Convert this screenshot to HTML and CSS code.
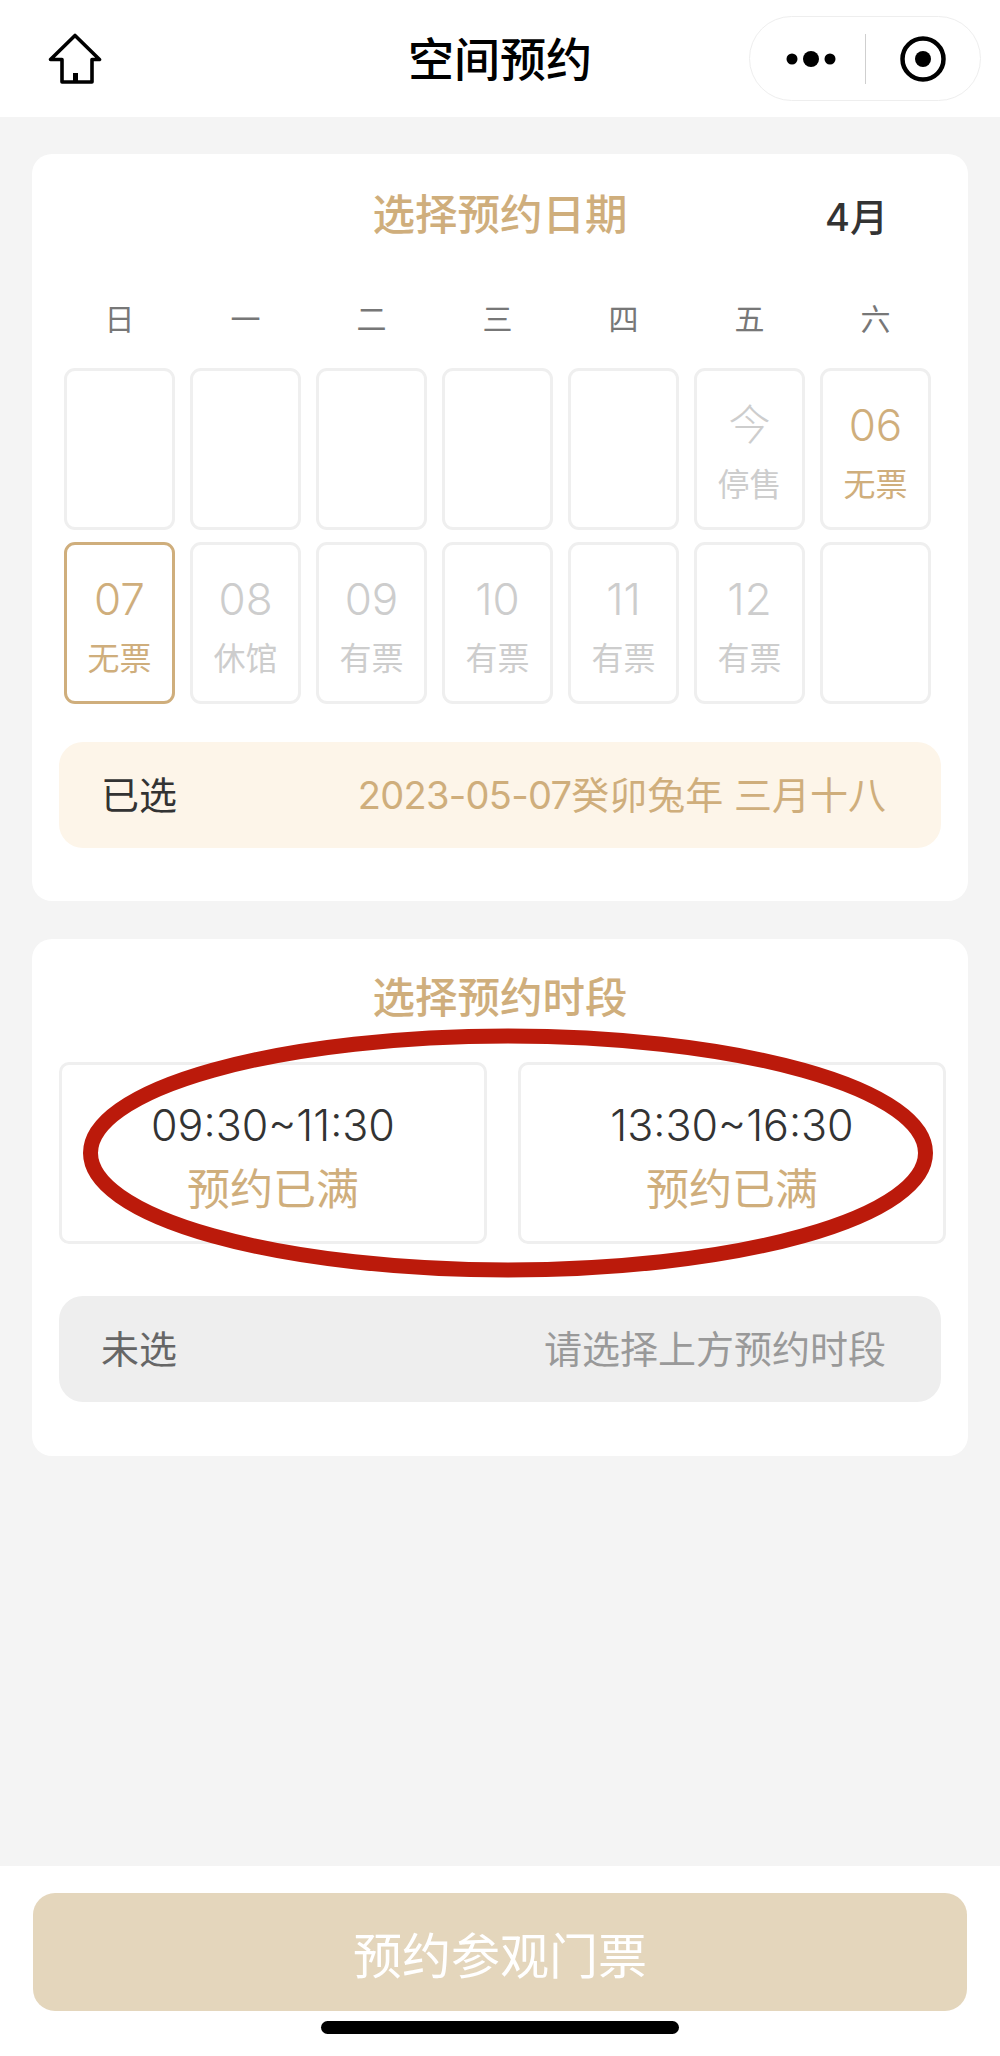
FILE: index.html
```html
<!DOCTYPE html>
<html lang="zh-CN">
<head>
<meta charset="utf-8">
<title>空间预约</title>
<link rel="stylesheet" href="styles.css">
</head>
<body>
<div class="page">
  <header class="nav">
    <svg class="home" viewBox="0 0 54 52" width="54" height="52" aria-hidden="true">
      <path d="M27 2.5 L51.5 26.5 H44 V49 H14 V26.5 H2.5 Z" fill="none" stroke="#000" stroke-width="3.6" stroke-linejoin="round"/>
      <rect x="25" y="40" width="5" height="9" fill="#000"/>
    </svg>
    <h1 class="nav-title">空间预约</h1>
    <div class="capsule">
      <svg class="more" viewBox="0 0 54 18" width="54" height="18" aria-hidden="true">
        <circle cx="6" cy="9" r="5.5" fill="#000"/><circle cx="25" cy="9" r="8" fill="#000"/><circle cx="44" cy="9" r="5.5" fill="#000"/>
      </svg>
      <span class="capsule-line"></span>
      <svg class="target" viewBox="0 0 46 46" width="46" height="46" aria-hidden="true">
        <circle cx="23" cy="23" r="20.5" fill="none" stroke="#000" stroke-width="4.5"/><circle cx="23" cy="23" r="8" fill="#000"/>
      </svg>
    </div>
  </header>

  <main class="content">
    <section class="card card-date">
      <div class="card-head">
        <h2 class="card-title">选择预约日期</h2>
        <span class="month">4月</span>
      </div>
      <div class="week">
        <span>日</span><span>一</span><span>二</span><span>三</span><span>四</span><span>五</span><span>六</span>
      </div>
      <div class="days">
        <div class="day"></div>
        <div class="day"></div>
        <div class="day"></div>
        <div class="day"></div>
        <div class="day"></div>
        <div class="day off"><span class="num num-cjk">今</span><span class="tag">停售</span></div>
        <div class="day gold"><span class="num">06</span><span class="tag">无票</span></div>
        <div class="day gold active"><span class="num">07</span><span class="tag">无票</span></div>
        <div class="day off"><span class="num">08</span><span class="tag">休馆</span></div>
        <div class="day off"><span class="num">09</span><span class="tag">有票</span></div>
        <div class="day off"><span class="num">10</span><span class="tag">有票</span></div>
        <div class="day off"><span class="num">11</span><span class="tag">有票</span></div>
        <div class="day off"><span class="num">12</span><span class="tag">有票</span></div>
        <div class="day"></div>
      </div>
      <div class="picked picked-on">
        <span class="picked-label">已选</span>
        <span class="picked-value"><span class="picked-date">2023-05-07</span>癸卯兔年 三月十八</span>
      </div>
    </section>

    <section class="card card-time">
      <h2 class="card-title">选择预约时段</h2>
      <div class="slots">
        <div class="slot"><span class="slot-time">09:30~11:30</span><span class="slot-state">预约已满</span></div>
        <div class="slot"><span class="slot-time">13:30~16:30</span><span class="slot-state">预约已满</span></div>
      </div>
      <svg class="mark" viewBox="0 0 850 250" width="850" height="250" aria-hidden="true">
        <ellipse cx="425" cy="125" rx="417.5" ry="117" fill="none" stroke="#bb1a0b" stroke-width="15"/>
      </svg>
      <div class="picked picked-off">
        <span class="picked-label">未选</span>
        <span class="picked-value">请选择上方预约时段</span>
      </div>
    </section>
  </main>

  <footer class="foot">
    <button class="book" type="button">预约参观门票</button>
    <div class="indicator"></div>
  </footer>
</div>
</body>
</html>
```

FILE: styles.css
```css
* { box-sizing: border-box; }
html, body { margin: 0; padding: 0; }
body {
  background: #f4f4f4;
  font-family: "Inter", "Noto Sans CJK SC", sans-serif;
  color: #333;
}
.page {
  width: 1000px;
  height: 2056px;
  display: flex;
  flex-direction: column;
}

/* nav */
.nav {
  flex: none;
  height: 117px;
  background: #fff;
  position: relative;
  display: flex;
  align-items: center;
  justify-content: space-between;
  padding: 0 19px 0 48px;
}
.home { display: block; }
.nav-title {
  position: absolute;
  left: 0;
  right: 0;
  top: 30px;
  margin: 0;
  text-align: center;
  font-size: 46px;
  line-height: 58px;
  font-weight: 500;
  color: #000;
}
.capsule {
  width: 232px;
  height: 85px;
  border: 1px solid #eeeeee;
  border-radius: 43px;
  display: flex;
  align-items: center;
  padding-left: 36px;
}
.more { display: block; }
.capsule-line { width: 1px; height: 50px; background: #cfcfcf; margin-left: 25px; }
.target { display: block; margin-left: 34px; }

/* content */
.content {
  flex: 1;
  padding: 37px 32px 0;
  display: flex;
  flex-direction: column;
  gap: 38px;
}
.card {
  background: #fff;
  border-radius: 20px;
  position: relative;
}
.card-date { height: 747px; }
.card-time { height: 517px; }
.card-head { position: relative; padding-top: 33px; }
.card-title {
  margin: 0;
  text-align: center;
  font-size: 42.5px;
  line-height: 56px;
  font-weight: 500;
  color: #cfae7c;
}
.month {
  position: absolute;
  right: 80px;
  top: 40px;
  font-size: 38px;
  line-height: 46px;
  font-weight: 500;
  color: #333;
}

.week {
  display: grid;
  grid-template-columns: repeat(7, 111px);
  column-gap: 15px;
  margin: 56px 0 0 32px;
  font-size: 30px;
  line-height: 40px;
  color: #777;
  text-align: center;
}
.days {
  display: grid;
  grid-template-columns: repeat(7, 111px);
  grid-auto-rows: 162px;
  gap: 12px 15px;
  margin: 29px 0 0 32px;
}
.day {
  border: 3px solid #efefef;
  border-radius: 11px;
  display: flex;
  flex-direction: column;
  align-items: center;
  padding-top: 29px;
}
.num { font-size: 44px; line-height: 50px; font-weight: 300; }
.num-cjk { font-size: 42px; }
.tag { font-size: 32px; line-height: 40px; margin-top: 15px; }
.off { color: #cdcdcd; }
.gold { color: #cfae7c; }
.active { border-color: #cfae7c; }

.picked {
  margin-left: 27px;
  width: 882px;
  height: 106px;
  border-radius: 24px;
  display: flex;
  align-items: center;
  justify-content: space-between;
  padding: 0 55px 0 42px;
  font-size: 38px;
  line-height: 48px;
}
.picked-on { margin-top: 38px; background: #fdf5e9; }
.picked-on .picked-label { color: #333; }
.picked-on .picked-value { color: #cfae7c; }
.picked-date { letter-spacing: -0.7px; }
.picked-off { margin-top: 52px; background: #eeeeee; }
.picked-off .picked-label { color: #666; }
.picked-off .picked-value { color: #999; }

.card-time .card-title { padding-top: 31px; }
.slots {
  display: flex;
  gap: 31px;
  margin: 36px 0 0 27px;
}
.slot {
  width: 428px;
  height: 182px;
  border: 3px solid #efefef;
  border-radius: 10px;
  display: flex;
  flex-direction: column;
  align-items: center;
  padding-top: 35px;
}
.slot-time { font-size: 43px; line-height: 50px; font-weight: 300; color: #333; }
.slot-state { font-size: 43px; line-height: 54px; margin-top: 12px; color: #cfae7c; }
.mark {
  position: absolute;
  left: 51px;
  top: 89px;
  pointer-events: none;
}

/* footer */
.foot {
  flex: none;
  height: 190px;
  background: #fff;
  padding-top: 27px;
  display: flex;
  flex-direction: column;
  align-items: center;
}
.book {
  width: 934px;
  height: 118px;
  border: 0;
  border-radius: 22px;
  background: #e4d6bc;
  color: #fff;
  font-family: inherit;
  font-size: 49px;
  padding: 0;
}
.indicator {
  width: 358px;
  height: 13px;
  background: #000;
  border-radius: 7px;
  margin-top: 10px;
}
```
